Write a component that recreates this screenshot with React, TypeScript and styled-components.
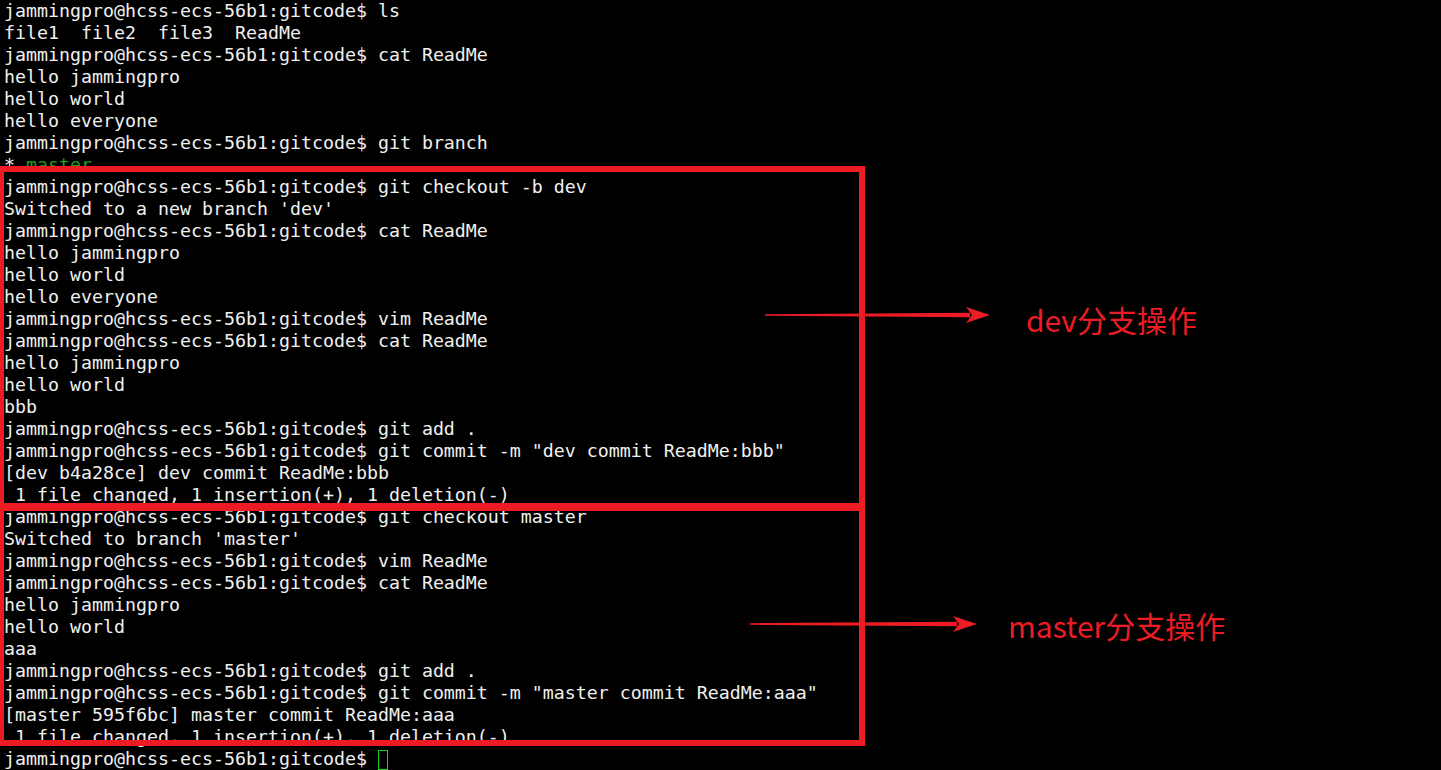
import React from "react";
import styled, { createGlobalStyle } from "styled-components";

const Global = createGlobalStyle`
  html, body { margin: 0; padding: 0; background: #000; }
  body { width: 1441px; height: 770px; overflow: hidden; }
`;

const Screen = styled.div`
  position: relative;
  width: 1441px;
  height: 770px;
  background: #000;
  overflow: hidden;
`;

const Terminal = styled.div`
  display: flex;
  flex-direction: column;
  padding-left: 4px;
  font-family: "DejaVu Sans Mono", "Liberation Mono", monospace;
  font-size: 18.27px;
  color: #f0f0f0;
  white-space: pre;
`;

const Line = styled.div`
  height: 22px;
  line-height: 22px;
  display: flex;
  align-items: center;
`;

const Green = styled.span`
  color: #1f9a1f;
`;

const Cursor = styled.span`
  display: inline-block;
  width: 10px;
  height: 20px;
  margin-top: 2px;
  border: 1px solid #1cd11c;
  box-sizing: border-box;
`;

const Box = styled.div<{ $top: number; $height: number }>`
  position: absolute;
  left: -2px;
  top: ${(p) => p.$top}px;
  width: 867px;
  height: ${(p) => p.$height}px;
  border: 6px solid #ed1c24;
  box-sizing: border-box;
`;

const Annotation = styled.div<{ $left: number; $top: number; $gap: number }>`
  position: absolute;
  left: ${(p) => p.$left}px;
  top: ${(p) => p.$top}px;
  display: flex;
  align-items: flex-start;
  gap: ${(p) => p.$gap}px;
`;

const ArrowSvg = styled.svg`
  display: block;
  flex: none;
`;

const Label = styled.div`
  font-family: "Noto Sans CJK SC", "Noto Sans", sans-serif;
  font-size: 30px;
  line-height: 40px;
  color: #ed1c24;
  white-space: nowrap;
`;

const P = "jammingpro@hcss-ecs-56b1:gitcode$ ";

const lines: React.ReactNode[] = [
  P + "ls",
  "file1  file2  file3  ReadMe",
  P + "cat ReadMe",
  "hello jammingpro",
  "hello world",
  "hello everyone",
  P + "git branch",
  <>
    {"* "}
    <Green>master</Green>
  </>,
  P + "git checkout -b dev",
  "Switched to a new branch 'dev'",
  P + "cat ReadMe",
  "hello jammingpro",
  "hello world",
  "hello everyone",
  P + "vim ReadMe",
  P + "cat ReadMe",
  "hello jammingpro",
  "hello world",
  "bbb",
  P + "git add .",
  P + 'git commit -m "dev commit ReadMe:bbb"',
  "[dev b4a28ce] dev commit ReadMe:bbb",
  " 1 file changed, 1 insertion(+), 1 deletion(-)",
  P + "git checkout master",
  "Switched to branch 'master'",
  P + "vim ReadMe",
  P + "cat ReadMe",
  "hello jammingpro",
  "hello world",
  "aaa",
  P + "git add .",
  P + 'git commit -m "master commit ReadMe:aaa"',
  "[master 595f6bc] master commit ReadMe:aaa",
  " 1 file changed, 1 insertion(+), 1 deletion(-)",
  <>
    {P}
    <Cursor />
  </>,
];

function Arrow({ length, y }: { length: number; y: number }) {
  const base = length - 20;
  return (
    <ArrowSvg width={length} height={40} viewBox={`0 0 ${length} 40`}>
      <path
        d={`M0 ${y - 0.8} L${base} ${y - 2.2} L${base} ${y + 2.2} L0 ${y + 0.8} Z`}
        fill="#ed1c24"
      />
      <path
        d={`M${base - 4} ${y - 8} L${length} ${y} L${base - 4} ${y + 8} L${base + 2} ${y} Z`}
        fill="#ed1c24"
      />
    </ArrowSvg>
  );
}

export default function App() {
  return (
    <Screen>
      <Global />
      <Terminal>
        {lines.map((l, i) => (
          <Line key={i}>{l}</Line>
        ))}
      </Terminal>
      <Box $top={166} $height={343} />
      <Box $top={505} $height={241} />
      <Annotation $left={765} $top={299} $gap={36}>
        <Arrow length={225} y={16} />
        <Label>dev分支操作</Label>
      </Annotation>
      <Annotation $left={750} $top={605} $gap={31}>
        <Arrow length={227} y={19} />
        <Label>master分支操作</Label>
      </Annotation>
    </Screen>
  );
}
